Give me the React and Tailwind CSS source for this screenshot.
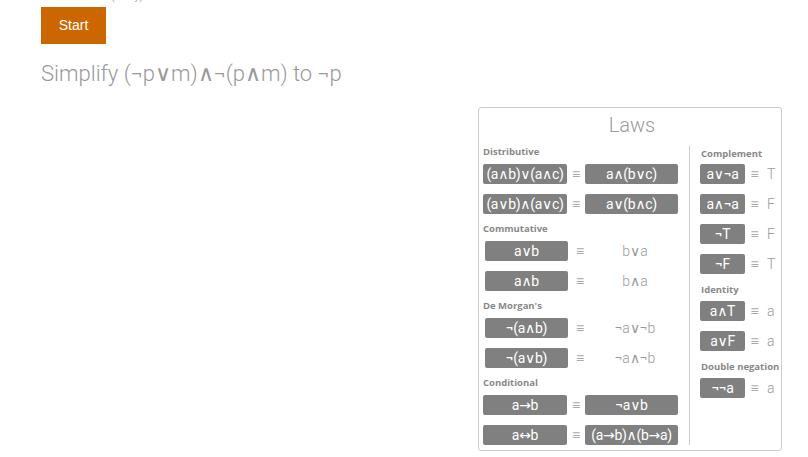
import React from "react";

const ROBOTO = { fontFamily: "Roboto, 'DejaVu Sans', sans-serif" };
const OPS = { fontFamily: "Lato, Inter, 'DejaVu Sans', sans-serif" };

// wrap ∧ / ∨ so they come from a lighter font than the DejaVu fallback
function sym(text) {
  return text.split(/([∧∨])/).map((part, i) =>
    part === "∧" || part === "∨" ? (
      <span key={i} style={OPS}>
        {part}
      </span>
    ) : (
      part
    )
  );
}

const sections = [
  {
    name: "Distributive",
    kind: "pair",
    rows: [
      ["(a∧b)∨(a∧c)", "a∧(b∨c)"],
      ["(a∨b)∧(a∨c)", "a∨(b∧c)"],
    ],
  },
  {
    name: "Commutative",
    kind: "plain",
    rows: [
      ["a∨b", "b∨a"],
      ["a∧b", "b∧a"],
    ],
  },
  {
    name: "De Morgan's",
    kind: "plain",
    rows: [
      ["¬(a∧b)", "¬a∨¬b"],
      ["¬(a∨b)", "¬a∧¬b"],
    ],
  },
  {
    name: "Conditional",
    kind: "pair",
    rows: [
      ["a→b", "¬a∨b"],
      ["a↔b", "(a→b)∧(b→a)"],
    ],
  },
];

const rightSections = [
  {
    name: "Complement",
    rows: [
      ["a∨¬a", "T"],
      ["a∧¬a", "F"],
      ["¬T", "F"],
      ["¬F", "T"],
    ],
  },
  {
    name: "Identity",
    rows: [
      ["a∧T", "a"],
      ["a∨F", "a"],
    ],
  },
  {
    name: "Double negation",
    rows: [["¬¬a", "a"]],
  },
];

function Chip({ children, className = "" }) {
  return (
    <span
      className={
        "block h-[20px] overflow-hidden whitespace-nowrap rounded-[2px] bg-[#808080] text-center text-[14px] leading-[20px] tracking-[-0.3px] text-white " +
        className
      }
    >
      {sym(children)}
    </span>
  );
}

function Equiv({ className = "" }) {
  return (
    <span className={"text-center text-[14px] font-light leading-[20px] text-[#aaa] " + className}>≡</span>
  );
}

function Label({ children, className = "h-[17px] leading-[20px]" }) {
  return (
    <div
      className={"whitespace-nowrap text-[9.5px] font-bold text-[#888] " + className}
      style={{ fontFamily: "'Open Sans', 'DejaVu Sans', sans-serif" }}
    >
      {children}
    </div>
  );
}

function LawRow({ kind, left, right }) {
  if (kind === "pair") {
    return (
      <div className="flex h-[30px] items-center">
        <Chip className="w-[84px]">{left}</Chip>
        <Equiv className="w-[18px]" />
        <Chip className="w-[93px]">{right}</Chip>
      </div>
    );
  }
  return (
    <div className="flex h-[30px] items-center pl-[2px]">
      <Chip className="w-[83px]">{left}</Chip>
      <Equiv className="w-[24px]" />
      <span className="w-[86px] text-center text-[14px] font-light leading-[20px] text-[#999]">
        {sym(right)}
      </span>
    </div>
  );
}

export default function App() {
  return (
    <div className="min-h-[457px] bg-white" style={ROBOTO}>
      <div className="h-[7px] overflow-hidden">
        <div className="-mt-[9px] pl-[2px] text-[10px] leading-[11px] text-[#aaa]">
          Best time: 12.6 seconds (today)
        </div>
      </div>

      <div className="pl-[41px]">
        <button
          className="h-[37px] w-[65px] bg-[#cc6600] text-[14px] text-white"
          style={{ fontFamily: "'Liberation Sans', Arial, sans-serif" }}
        >
          Start
        </button>
        <div className="mt-[16px] h-[26px] text-[22px] font-light leading-[26px] text-[#999]">
          {sym("Simplify (¬p∨m)∧¬(p∧m) to ¬p")}
        </div>
      </div>

      <div className="mt-[21px] flex justify-end pr-[26px]">
        <div className="w-[304px] rounded-[3px] border border-[#ccc] pl-[4px]">
          <div className="h-[34px] pt-[5px] text-center text-[20px] font-light leading-[24px] text-[#999]">
            Laws
          </div>
          <div className="flex">
            <div className="w-[206px]">
              {sections.map(s => (
                <div key={s.name}>
                  <Label>{s.name}</Label>
                  {s.rows.map(r => (
                    <LawRow key={r[0]} kind={s.kind} left={r[0]} right={r[1]} />
                  ))}
                </div>
              ))}
            </div>
            <div className="mt-[4px] mb-[5px] flex-1 border-l border-[#ccc] pl-[10px]">
              {rightSections.map((s, i) => (
                <div key={s.name}>
                  <Label className={i === 0 ? "h-[13px] pl-[1px] leading-[15px]" : "h-[17px] pl-[1px] leading-[22px]"}>
                    {s.name}
                  </Label>
                  {s.rows.map(r => (
                    <div key={r[0]} className="flex h-[30px] items-center">
                      <Chip className="w-[45px]">{r[0]}</Chip>
                      <Equiv className="w-[19px]" />
                      <span className="ml-[3px] text-[14px] font-light leading-[20px] text-[#999]">{r[1]}</span>
                    </div>
                  ))}
                </div>
              ))}
            </div>
          </div>
        </div>
      </div>
    </div>
  );
}
